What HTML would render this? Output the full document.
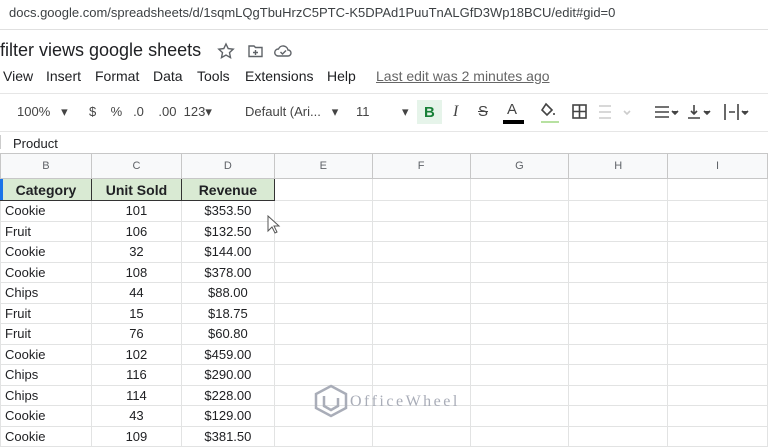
<!DOCTYPE html>
<html><head><style>
*{margin:0;padding:0;box-sizing:border-box}
body{width:768px;height:440px;overflow:hidden;background:#fff;font-family:"Liberation Sans",Arial,sans-serif;position:relative;color:#202124}
.a{position:absolute;white-space:nowrap}
.grid{position:absolute;left:0;top:153px;width:768px}
table{border-collapse:collapse;table-layout:fixed}
td{border:1px solid #e2e3e3;height:20.5px;font-size:13px;padding:0 4px;overflow:hidden;white-space:nowrap}
tr.h td{background:#f8f9fa;color:#5f6368;font-size:11px;text-align:center;height:25px;border-color:#c7c7c7}
td.c{text-align:center}
tr.hd td{height:22px}
tr.hd td.x{background:#d9ead3;font-weight:bold;font-size:14px;text-align:center;border:1px solid #333}
.tb{font-size:13px;color:#444}
.m{position:absolute;top:68px;font-size:14px;color:#202124}
</style></head><body>
<div class="a" style="left:9px;top:5px;font-size:13px;color:#3c4043">docs.google.com/spreadsheets/d/1sqmLQgTbuHrzC5PTC-K5DPAd1PuuTnALGfD3Wp18BCU/edit#gid=0</div>
<div class="a" style="left:0;top:29px;width:768px;border-top:1px solid #e0e0e0"></div>
<div class="a" style="left:0;top:40px;font-size:18px;color:#202124">filter views google sheets</div>
<svg class="a" style="left:216px;top:41px" width="90" height="20" viewBox="0 0 90 20" fill="none" stroke="#5f6368" stroke-width="1.4">
<path d="M10 3l2.2 4.6 5 .6-3.7 3.4 1 5L10 14l-4.5 2.6 1-5L2.8 8.2l5-.6z"/>
<path d="M33 5h5l1.5 1.5H46v9H33z M39.5 9v5 M37 11.5h5"/>
<path d="M62 15h10a3 3 0 0 0 0-6 5 5 0 0 0-9.5-1A3.5 3.5 0 0 0 62 15z M64.5 11l2 2 3.5-3.5"/>
</svg>
<div class="m" style="left:3px">View</div>
<div class="m" style="left:46px">Insert</div>
<div class="m" style="left:95px">Format</div>
<div class="m" style="left:153px">Data</div>
<div class="m" style="left:197px">Tools</div>
<div class="m" style="left:245px">Extensions</div>
<div class="m" style="left:327px">Help</div>
<div class="a" style="left:376px;top:68px;font-size:14px;color:#666;text-decoration:underline">Last edit was 2 minutes ago</div>
<div class="a" style="left:0;top:93px;width:768px;height:39px;border-top:1px solid #e6e6e6;border-bottom:1px solid #e6e6e6"></div>
<div class="a tb" style="left:17px;top:104px">100%&nbsp;&nbsp;&nbsp;▾</div>
<div class="a tb" style="left:89px;top:104px">$&nbsp;&nbsp;&nbsp;&nbsp;%&nbsp;&nbsp;&nbsp;.0&nbsp;&nbsp;&nbsp;&nbsp;.00&nbsp;&nbsp;123▾</div>
<div class="a tb" style="left:245px;top:104px">Default (Ari...&nbsp;&nbsp;&nbsp;▾</div>
<div class="a tb" style="left:356px;top:104px">11&nbsp;&nbsp;&nbsp;&nbsp;&nbsp;&nbsp;&nbsp;&nbsp;&nbsp;▾</div>
<div class="a" style="left:417px;top:100px;width:25px;height:24px;background:#e6f4ea"></div>
<div class="a" style="left:424px;top:104px;font-weight:bold;color:#188038;font-size:15px">B</div>
<div class="a" style="left:453px;top:103px;font-style:italic;font-size:16px;color:#444;font-family:'Liberation Serif',serif">I</div>
<div class="a" style="left:478px;top:103px;font-size:15px;color:#444;text-decoration:line-through">S</div>
<div class="a" style="left:507px;top:101px;font-size:15px;color:#444">A</div>
<div class="a" style="left:503px;top:120px;width:21px;height:4px;background:#000"></div>
<svg class="a" style="left:540px;top:100px" width="230" height="26" viewBox="0 0 230 26" fill="none" stroke="#444" stroke-width="1.6">
<path d="M6 4l6 6-5 5-5-5z M14 13v2" /><path d="M1 22h18" stroke="#b7e1a1" stroke-width="2"/>
<rect x="33" y="5" width="13" height="13"/><path d="M33 11.5h13M39.5 5v13"/>
<path d="M59 6h12M59 18h12M59 12h12" stroke="#ccc"/><path d="M84 11l3 3 3-3" stroke="#ccc"/>
<path d="M115 7h14M115 12h14M115 17h14"/><path d="M132 11l3 3 3-3" fill="#444"/>
<path d="M148 18h12M154 5v9M151 11l3 3 3-3"/><path d="M164 11l3 3 3-3" fill="#444"/>
<path d="M185 4v16M198 4v16M189 12h6"/><path d="M202 11l3 3 3-3" fill="#444"/>
</svg>
<div class="a" style="left:0;top:135px;height:14px;border-left:1px solid #ccc"></div>
<div class="a" style="left:13px;top:136px;font-size:13px">Product</div>
<div class="grid"><table>
<colgroup><col style="width:91px"><col style="width:90px"><col style="width:93px"><col style="width:98px"><col style="width:98px"><col style="width:99px"><col style="width:99px"><col style="width:100px"></colgroup>
<tr class="h"><td>B</td><td>C</td><td>D</td><td>E</td><td>F</td><td>G</td><td>H</td><td>I</td></tr>
<tr class="hd"><td class="x">Category</td><td class="x">Unit Sold</td><td class="x">Revenue</td><td></td><td></td><td></td><td></td><td></td></tr>
<tr><td>Cookie</td><td class="c">101</td><td class="c">$353.50</td><td></td><td></td><td></td><td></td><td></td></tr>
<tr><td>Fruit</td><td class="c">106</td><td class="c">$132.50</td><td></td><td></td><td></td><td></td><td></td></tr>
<tr><td>Cookie</td><td class="c">32</td><td class="c">$144.00</td><td></td><td></td><td></td><td></td><td></td></tr>
<tr><td>Cookie</td><td class="c">108</td><td class="c">$378.00</td><td></td><td></td><td></td><td></td><td></td></tr>
<tr><td>Chips</td><td class="c">44</td><td class="c">$88.00</td><td></td><td></td><td></td><td></td><td></td></tr>
<tr><td>Fruit</td><td class="c">15</td><td class="c">$18.75</td><td></td><td></td><td></td><td></td><td></td></tr>
<tr><td>Fruit</td><td class="c">76</td><td class="c">$60.80</td><td></td><td></td><td></td><td></td><td></td></tr>
<tr><td>Cookie</td><td class="c">102</td><td class="c">$459.00</td><td></td><td></td><td></td><td></td><td></td></tr>
<tr><td>Chips</td><td class="c">116</td><td class="c">$290.00</td><td></td><td></td><td></td><td></td><td></td></tr>
<tr><td>Chips</td><td class="c">114</td><td class="c">$228.00</td><td></td><td></td><td></td><td></td><td></td></tr>
<tr><td>Cookie</td><td class="c">43</td><td class="c">$129.00</td><td></td><td></td><td></td><td></td><td></td></tr>
<tr><td>Cookie</td><td class="c">109</td><td class="c">$381.50</td><td></td><td></td><td></td><td></td><td></td></tr>
</table></div>
<div class="a" style="left:0;top:179px;width:3px;height:21px;background:#1a73e8"></div>
<svg class="a" style="left:267px;top:215px" width="14" height="20" viewBox="0 0 14 20"><path d="M1 1v15l4-4 3 6 2-1-3-6h5z" fill="#fff" stroke="#555"/></svg>
<svg class="a" style="left:313px;top:384px" width="36" height="34" viewBox="0 0 36 34" fill="none" stroke="#a9adb8" stroke-width="2.5"><path d="M18 2l15 8v14l-15 8-15-8V10z"/><path d="M11 12v10l7 4 7-4v-8"/></svg>
<div class="a" style="left:350px;top:393px;font-family:'Liberation Serif',serif;font-size:16px;letter-spacing:2.5px;color:#a9adb8">OfficeWheel</div>
</body></html>
